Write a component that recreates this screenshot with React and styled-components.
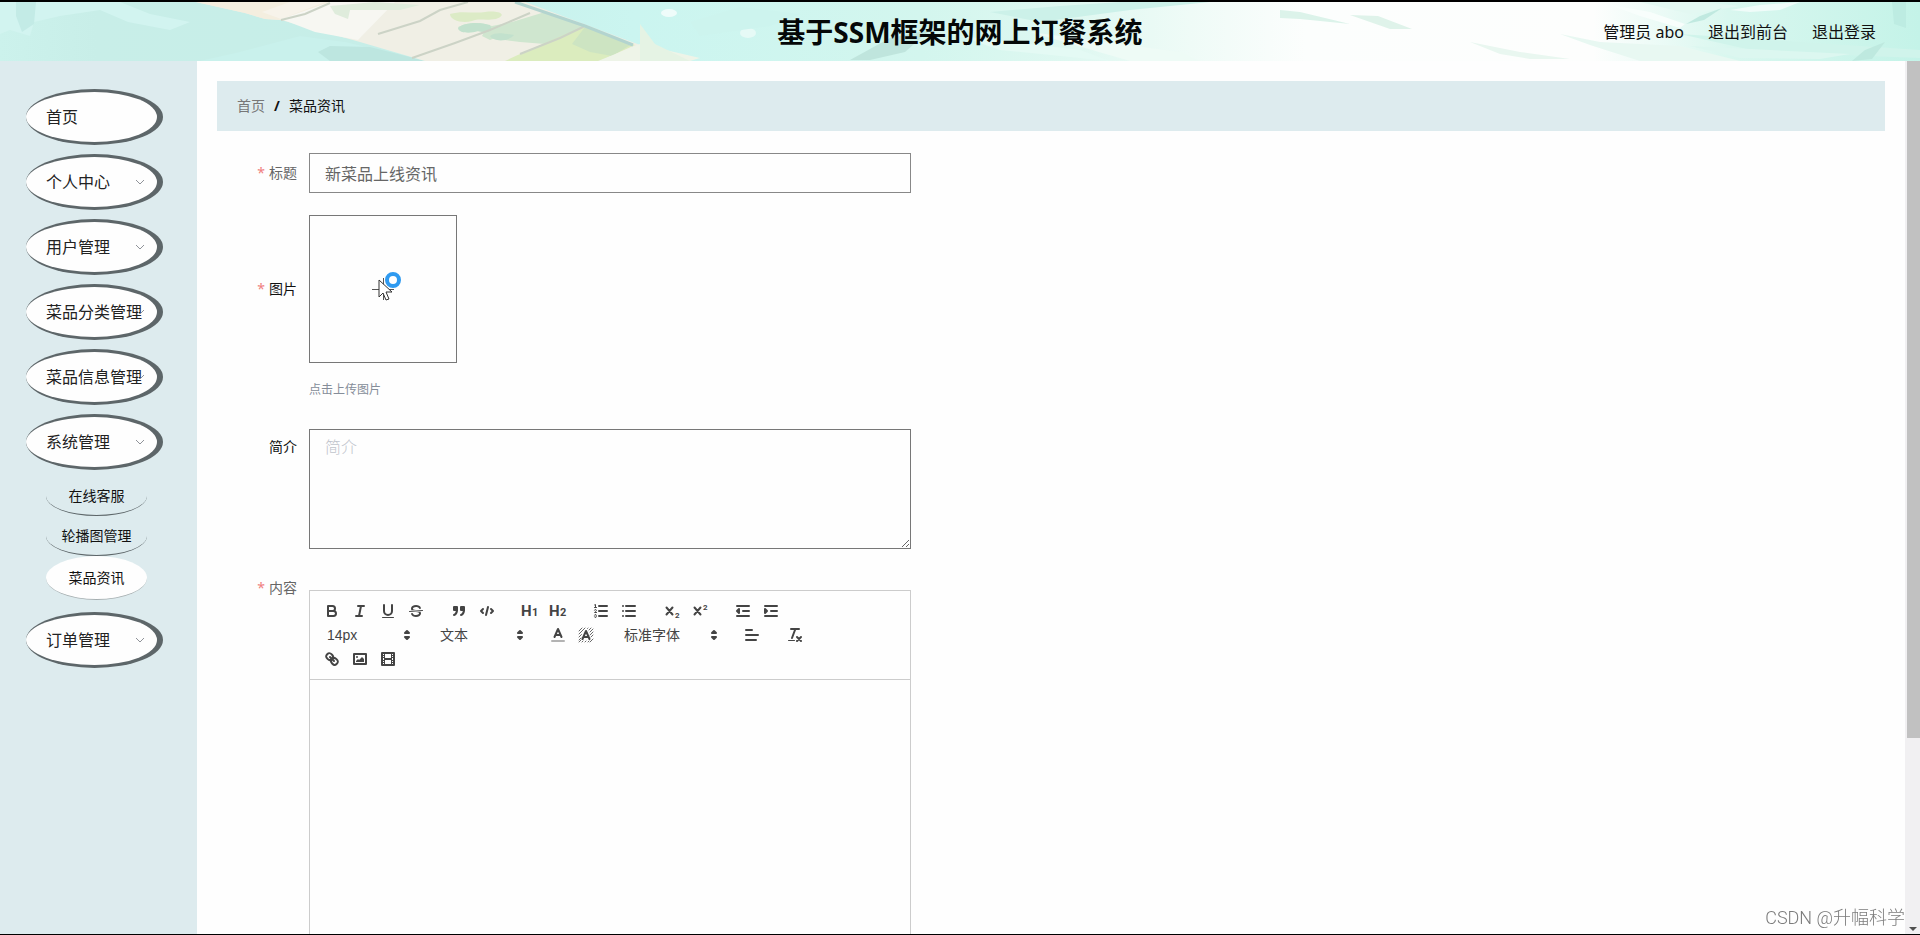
import React from 'react';
import styled, { createGlobalStyle } from 'styled-components';

const GlobalStyle = createGlobalStyle`
  *, *::before, *::after { box-sizing: border-box; }
  html, body { margin: 0; padding: 0; }
  body {
    font-family: "Noto Sans", "Noto Sans CJK SC", sans-serif;
    font-size: 14px;
    color: #111;
    background: #fefefe;
  }
  button, input, textarea, select { font: inherit; color: inherit; margin: 0; }
  a { color: inherit; text-decoration: none; }
`;

const Shell = styled.div`
  display: flex;
  flex-direction: column;
  height: 100vh;
  overflow: hidden;
  border-top: 2px solid #000;
  border-bottom: 1px solid #000;
`;

/* ---------- header ---------- */

const Header = styled.header`
  position: relative;
  flex: none;
  height: 59px;
  display: grid;
  grid-template-columns: 1fr auto 1fr;
  align-items: center;
  padding: 0 44px;
  background: #d3f4ed;
`;

const Art = styled.svg`
  position: absolute;
  inset: 0;
  width: 100%;
  height: 100%;
`;

const Title = styled.h1`
  position: relative;
  grid-column: 2;
  margin: 0;
  font-size: 28px;
  line-height: 40px;
  font-weight: 700;
  color: #050808;
`;

const UserNav = styled.nav`
  position: relative;
  display: flex;
  justify-content: flex-end;
  gap: 24px;
  font-size: 16px;
  line-height: 24px;
`;

function HeaderArt() {
  return (
    <Art viewBox="0 0 1920 59" preserveAspectRatio="none" aria-hidden="true">
      <defs>
        <linearGradient id="base" x1="0" x2="1" y1="0" y2="0">
          <stop offset="0" stopColor="#ccf2ec" />
          <stop offset="0.05" stopColor="#c8eee8" />
          <stop offset="0.2" stopColor="#c6eee8" />
          <stop offset="0.33" stopColor="#cbf5f0" />
          <stop offset="0.48" stopColor="#d3f6ee" />
          <stop offset="0.56" stopColor="#dff8f1" />
          <stop offset="0.62" stopColor="#effbf7" />
          <stop offset="0.68" stopColor="#fcfefd" />
          <stop offset="0.83" stopColor="#fdfefd" />
          <stop offset="0.9" stopColor="#d9f7ef" />
          <stop offset="1" stopColor="#c4f3e8" />
        </linearGradient>
      </defs>
      <rect width="1920" height="59" fill="url(#base)" />
      <path d="M0 0H120L150 12L190 20L170 28L128 20L100 8L60 14L34 20L30 34L10 28L0 32Z" fill="#d2f4f0" />
      <path d="M16 0H36L34 22L22 30L16 14Z" fill="#c3ebe6" />
      <path d="M200 59L240 50L300 34L345 40L425 59Z" fill="#c9f1ec" />
      <path d="M318 50L330 44L370 45L410 55L425 59H330Z" fill="#bde6e0" />
      <path d="M196 0H525L640 43V59H425L360 40L281 18L265 17L245 11Z" fill="#f0efe5" />
      <path d="M196 0H330L281 18L265 17L245 11Z" fill="#f4eedf" />
      <path d="M262 10L290 0H325L281 17Z" fill="#f7f3ea" />
      <path d="M281 17L330 0H395L358 38L315 30Z" fill="#f7f7f2" />
      <path d="M330 4L375 0L420 3L400 8L350 8L348 17L335 12Z" fill="#dfecdc" />
      <path d="M512 20L545 10L585 24L545 42L520 40L505 38L495 36L490 38L482 34L484 30L476 29L462 30L458 25L466 22L480 21L492 24Z" fill="#cfe6cf" />
      <path d="M450 12C462 8 474 12 485 10C500 8 508 13 496 17C484 19 480 16 472 19C462 22 450 18 450 12Z" fill="#dcebc6" />
      <path d="M458 26C464 20 480 20 490 23C494 30 486 31 478 29C470 32 458 31 458 26Z" fill="#c2e1cd" />
      <path d="M490 34C496 29 506 32 514 33C508 40 494 40 490 34Z" fill="#c2e1cd" />
      <path d="M520 52L582 25L635 43L600 59H505Z" fill="#dbecbe" />
      <path d="M585 25L632 42L612 54L590 50L572 42Z" fill="#cde4c2" />
      <path d="M598 59L640 42L700 56L690 59Z" fill="#eef4e8" />
      <g fill="none" stroke="#ccd3c6" strokeWidth="2">
        <path d="M281 18L305 12L330 1" />
        <path d="M378 32L420 19L440 8L468 0" />
        <path d="M412 56L455 41L490 28L530 11" />
        <path d="M520 52L560 36L585 24" />
      </g>
      <path d="M515 0L585 24L633 43" fill="none" stroke="#b3d4cf" strokeWidth="3" />
      <path d="M640 22L655 42L690 59H640Z" fill="#e5f3e4" />
      <ellipse cx="669" cy="11" rx="8" ry="4" fill="#effcfa" />
      <ellipse cx="748" cy="31" rx="8" ry="5" fill="#e6faf6" />
      <path d="M690 20L740 5L800 12L770 24L700 34Z" fill="#cdf4ee" />
      <path d="M850 58L890 36L930 28L905 50L870 58Z" fill="#bfe5dd" />
      <path d="M990 10L1060 4L1120 0H1210L1130 8L1040 20Z" fill="#ccf1e9" />
      <path d="M1030 30L1180 50L1200 59H1130Z" fill="#eefbf6" />
      <path d="M960 34L1080 48L1110 59L1000 48Z" fill="#e4faf4" />
      <path d="M1280 8L1300 10L1350 22L1300 17L1280 16Z" fill="#dcf3ea" />
      <path d="M1350 13L1378 14L1412 27L1390 27Z" fill="#dff3ea" />
      <path d="M1470 40L1520 50L1570 57H1530L1500 52Z" fill="#e9f7f0" />
      <path d="M1560 32L1600 40L1680 44L1740 59H1640L1590 43Z" fill="#e8f8f2" />
      <path d="M1640 0L1690 12L1740 4L1700 0Z" fill="#e3f8f2" />
      <path d="M1610 3L1650 10L1685 22L1680 26L1640 14Z" fill="#f8fefc" />
      <path d="M1686 22L1700 14L1722 6L1704 18Z" fill="#c0e9e0" />
      <path d="M1730 8L1760 3L1800 0L1780 8L1750 10Z" fill="#f0fcf9" />
      <path d="M1680 32L1920 48V56L1760 50Z" fill="#d0f4eb" />
      <path d="M1690 44L1850 52L1820 57L1740 56Z" fill="#dcf7f0" />
      <path d="M1852 59L1865 48L1885 40L1872 57Z" fill="#bee9df" />
      <path d="M1892 0H1906V26L1894 22Z" fill="#bdece2" />
    </Art>
  );
}

/* ---------- frame ---------- */

const Body = styled.div`
  flex: 1;
  min-height: 0;
  display: flex;
`;

const Sidebar = styled.nav`
  flex: none;
  width: 197px;
  padding: 28px 34px 0 26px;
  background: #ddebee;
`;

const Menu = styled.ul`
  list-style: none;
  margin: 0;
  padding: 0;
  display: flex;
  flex-direction: column;
  gap: 9px;
`;

const Pill = styled.button`
  display: flex;
  align-items: center;
  width: 100%;
  height: 56px;
  padding: 0 12px 0 20px;
  border: solid #5d6669;
  border-width: 3px 6px 3px 0;
  border-radius: 50%;
  background: #fefefe;
  font-size: 16px;
  line-height: 24px;
  color: #222;
  white-space: nowrap;
  cursor: pointer;

  svg { flex: none; margin-left: auto; }
`;

const PillText = styled.span`
  flex: 0 1 auto;
  min-width: 0;
  overflow: visible;
`;

const SubMenu = styled.ul`
  list-style: none;
  margin: 6px 0 3px;
  padding: 0 16px 0 20px;
`;

const SubLink = styled.a`
  display: flex;
  align-items: center;
  justify-content: center;
  height: ${(p) => (p.$active ? 44 : 40)}px;
  border-bottom: 1px solid ${(p) => (p.$active ? '#a4adaf' : '#5d6669')};
  border-radius: 50%;
  background: ${(p) => (p.$active ? '#fefefe' : 'transparent')};
  line-height: 20px;
  white-space: nowrap;
`;

const Main = styled.main`
  flex: 1;
  min-width: 0;
  overflow: hidden;
  padding: 20px 20px 0;
`;

const ScrollTrack = styled.div`
  flex: none;
  width: 15px;
  display: flex;
  flex-direction: column;
  align-items: flex-end;
  justify-content: space-between;
  background: #f1f0f2;
`;

const ScrollThumb = styled.div`
  width: 13px;
  height: 77.5%;
  background: #c1c1c1;
`;

const ScrollArrow = styled.svg`
  width: 14px;
  height: 8px;
`;

const Crumbs = styled.nav`
  display: flex;
  align-items: center;
  gap: 8px;
  height: 50px;
  padding: 0 20px;
  background: #ddebee;
  line-height: 20px;

  a { color: #777; }
  b { width: 8px; text-align: center; }
`;

/* ---------- form ---------- */

const Form = styled.form`
  display: flex;
  flex-direction: column;
  max-width: 694px;
  padding-top: 22px;
`;

const Row = styled.div`
  display: flex;
  align-items: ${(p) => (p.$center ? 'center' : 'flex-start')};
  gap: 12px;
  margin-bottom: ${(p) => p.$gap || 22}px;
`;

const Label = styled.label`
  flex: none;
  width: 80px;
  text-align: right;
  line-height: ${(p) => p.$line || 20}px;
  color: ${(p) => (p.$muted ? '#666' : '#111')};

  &::before {
    content: ${(p) => (p.$required ? '"*"' : 'none')};
    margin-right: 4px;
    color: #f08080;
  }
`;

const TextInput = styled.input`
  flex: 1;
  min-width: 0;
  height: 40px;
  padding: 0 15px;
  border: 1px solid #888;
  border-radius: 0;
  background: #fefefe;
  font-size: 16px;
  color: #666;
  outline: none;
`;

const TextArea = styled.textarea`
  flex: 1;
  min-width: 0;
  height: 120px;
  padding: 5px 15px;
  border: 1px solid #777;
  border-radius: 0;
  background: #fefefe;
  font-size: 16px;
  line-height: 24px;
  outline: none;
  resize: vertical;

  &::placeholder { color: #c0c4cc; opacity: 1; font-weight: 300; }
`;

const Upload = styled.button`
  position: relative;
  display: flex;
  align-items: center;
  justify-content: center;
  width: 148px;
  height: 148px;
  padding: 0;
  border: 1px solid #777;
  background: #fefefe;
  cursor: pointer;
`;

const Pointer = styled.svg`
  position: absolute;
  left: 66px;
  top: 54px;
  width: 28px;
  height: 34px;
`;

const Tip = styled.p`
  margin: 0 0 29px 92px;
  font-size: 12px;
  line-height: 20px;
  color: #858d99;
`;

/* ---------- rich text editor ---------- */

const Editor = styled.div`
  flex: 1;
  min-width: 0;
  margin-top: 12px;
  border: 1px solid #ccc;
`;

const Toolbar = styled.div`
  display: flex;
  flex-direction: column;
  padding: 8px;
  border-bottom: 1px solid #ccc;
`;

const ToolRow = styled.div`
  display: flex;
  gap: 15px;
  height: 24px;
`;

const Group = styled.div`
  display: flex;
`;

const Tool = styled.button`
  display: flex;
  align-items: center;
  justify-content: center;
  width: 28px;
  height: 24px;
  padding: 3px 5px;
  border: 0;
  background: none;
  cursor: pointer;
`;

const Glyph = styled.svg`
  flex: none;
  width: 18px;
  height: 18px;
  fill: none;
  stroke: #444;
  stroke-width: 2;
  stroke-linecap: round;
  stroke-linejoin: round;

  .fill { fill: #444; stroke: none; }
  .solid { fill: #444; }
  .thin { stroke-width: 1; }
  .soft { opacity: 0.4; }
  text { fill: #444; stroke: none; font-family: Roboto, sans-serif; font-weight: 700; }
`;

const Picker = styled.span`
  display: grid;
  align-items: center;
  width: ${(p) => p.$width}px;
  height: 24px;

  > * { grid-area: 1 / 1; }
  > svg { justify-self: end; pointer-events: none; }
`;

const Select = styled.select`
  width: 100%;
  height: 24px;
  padding: 0 18px 0 9px;
  border: 0;
  background: none;
  appearance: none;
  font-family: "Liberation Sans", "Noto Sans CJK SC", sans-serif;
  font-size: 14px;
  line-height: 24px;
  color: #444;
  outline: none;
`;

const Canvas = styled.div`
  min-height: 400px;
  padding: 12px 15px;
  outline: none;
`;

const Watermark = styled.div`
  position: fixed;
  right: 15px;
  bottom: 4px;
  font-family: Roboto, "Noto Sans CJK SC", sans-serif;
  font-size: 18px;
  font-weight: 300;
  line-height: 26px;
  color: #7c7c7c;
  pointer-events: none;
`;

const ICONS = {
  bold: (
    <>
      <path d="M5 4H9.5A2.5 2.5 0 0 1 9.5 9H5Z" />
      <path d="M5 9H10.5A2.5 2.5 0 0 1 10.5 14H5Z" />
    </>
  ),
  italic: <path d="M7 4H13M5 14H11M8 14L10 4" />,
  underline: (
    <>
      <path d="M5 3V9A4 4 0 0 0 13 9V3" />
      <rect className="fill" x="3" y="15" width="12" height="1" rx="0.5" />
    </>
  ),
  strike: (
    <>
      <path className="thin" d="M15.5 8.5L2.5 9.5" />
      <path className="fill" d="M9.007,8C6.542,7.791,6,7.519,6,6.5,6,5.792,7.283,5,9,5c1.571,0,2.765.679,2.969,1.309a1,1,0,0,0,1.9-.617C13.356,4.106,11.354,3,9,3,6.2,3,4,4.538,4,6.5a3.2,3.2,0,0,0,.5,1.843Z" />
      <path className="fill" d="M8.984,10C11.457,10.208,12,10.479,12,11.5c0,0.708-1.283,1.5-3,1.5-1.571,0-2.765-.679-2.969-1.309a1,1,0,1,0-1.9.617C4.644,13.894,6.646,15,9,15c2.8,0,5-1.538,5-3.5a3.2,3.2,0,0,0-.5-1.843Z" />
    </>
  ),
  quote: (
    <>
      <rect className="solid" x="4" y="5" width="3" height="3" />
      <rect className="solid" x="11" y="5" width="3" height="3" />
      <path className="solid" d="M7 8c0 4.031-3 5-3 5M14 8c0 4.031-3 5-3 5" />
    </>
  ),
  code: <path d="M5 7L3 9L5 11M13 7L15 9L13 11M10 5L8 13" />,
  h1: (
    <>
      <text x="0" y="14" fontSize="15">H</text>
      <text x="11" y="14" fontSize="11">1</text>
    </>
  ),
  h2: (
    <>
      <text x="0" y="14" fontSize="15">H</text>
      <text x="11" y="14" fontSize="11">2</text>
    </>
  ),
  ordered: (
    <>
      <path d="M7 4H15M7 9H15M7 14H15" />
      <path className="thin" d="M2.5 5.5H4.5M3.5 5.5V2.5L2.6 2.9M4.5 10.5h-2c0-.234 1.85-1.076 1.85-2.234A.959.959 0 0 0 2.5 8.156M2.5 14.846a.959.959 0 0 0 1.85-.109A.7.7 0 0 0 3.75 14a.688.688 0 0 0 .6-.736.959.959 0 0 0-1.85-.109" />
    </>
  ),
  bullet: <path d="M6 4H15M6 9H15M6 14H15M3 4H3M3 9H3M3 14H3" />,
  sub: (
    <>
      <path d="M3.5 5.5L9.5 12.5M9.5 5.5L3.5 12.5" />
      <text x="12" y="16" fontSize="8">2</text>
    </>
  ),
  sup: (
    <>
      <path d="M3.5 5.5L9.5 12.5M9.5 5.5L3.5 12.5" />
      <text x="12" y="8" fontSize="8">2</text>
    </>
  ),
  outdent: (
    <>
      <path d="M3 14H15M3 4H15M9 9H15" />
      <path className="solid" d="M5 7V11L3 9Z" />
    </>
  ),
  indent: (
    <>
      <path d="M3 14H15M3 4H15M9 9H15" />
      <path className="solid" d="M3 7V11L5 9Z" />
    </>
  ),
  color: (
    <>
      <path className="soft" d="M3 15H15" />
      <path d="M5.5 11L9 3L12.5 11M6.4 9H11.6" />
    </>
  ),
  background: (
    <>
      <path className="thin" opacity="0.8" d="M2 5L5 2M2 8L8 2M2 11L4.5 8.5M2 14L4 12M2 16L4 14M5 16L6 15M8 16L9 15M11 16L12 15M13 16L16 13M10.5 2.5L11 2M12 4L14 2M13 6L16 3M13 9L16 6M14 11L16 9" />
      <path d="M5.5 13L9 5L12.5 13M6.4 11H11.6" />
    </>
  ),
  align: <path d="M3 9H15M3 14H13M3 4H9" />,
  clean: (
    <>
      <path d="M5 3H13M6 12L9.35 3M11 11L15 15M15 11L11 15" />
      <rect className="fill" x="2" y="14" width="7" height="1" rx="0.5" />
    </>
  ),
  link: (
    <>
      <path d="M7 7L11 11" />
      <path d="M8.9,4.577a3.476,3.476,0,0,1,.36,4.679A3.476,3.476,0,0,1,4.577,8.9C3.185,7.5,2.035,6.4,4.217,4.217S7.5,3.185,8.9,4.577Z" />
      <path d="M13.423,9.1a3.476,3.476,0,0,0-4.679-.36,3.476,3.476,0,0,0,.36,4.679c1.392,1.392,2.5,2.542,4.679.36S14.815,10.5,13.423,9.1Z" />
    </>
  ),
  image: (
    <>
      <rect x="3" y="4" width="12" height="10" />
      <circle className="fill" cx="6" cy="7" r="1" />
      <path className="fill" d="M5 12V11L7 9L8 10L11 7L13 9V12Z" />
    </>
  ),
  video: (
    <>
      <rect x="3" y="3" width="12" height="12" />
      <path className="fill" d="M5 3H6V15H5ZM12 3H13V15H12ZM5 8H13V10H5ZM3 5H6V6H3ZM3 7H6V8H3ZM3 10H6V11H3ZM3 12H6V13H3ZM12 5H15V6H12ZM12 7H15V8H12ZM12 10H15V11H12ZM12 12H15V13H12Z" />
    </>
  ),
  arrows: <path d="M7 11H11L9 13ZM7 7H11L9 5Z" />,
};

function Icon({ name }) {
  return <Glyph viewBox="0 0 18 18" aria-hidden="true">{ICONS[name]}</Glyph>;
}

function Tools({ items }) {
  return (
    <Group>
      {items.map(([name, label]) => (
        <Tool key={name} type="button" aria-label={label}><Icon name={name} /></Tool>
      ))}
    </Group>
  );
}

function PickerField({ label, value, width }) {
  return (
    <Picker $width={width}>
      <Select aria-label={label} defaultValue={value}>
        <option>{value}</option>
      </Select>
      <Icon name="arrows" />
    </Picker>
  );
}

function Chevron() {
  return (
    <svg width="10" height="6" viewBox="0 0 10 6" fill="none" stroke="#909399" aria-hidden="true">
      <path d="M1 1L5 5L9 1" />
    </svg>
  );
}

const MENU = [
  { text: '首页', plain: true },
  { text: '个人中心' },
  { text: '用户管理' },
  { text: '菜品分类管理' },
  { text: '菜品信息管理' },
  { text: '系统管理', children: ['在线客服', '轮播图管理', '菜品资讯'] },
  { text: '订单管理' },
];

export default function App() {
  return (
    <>
      <GlobalStyle />
      <Shell>
        <Header>
          <HeaderArt />
          <Title>基于SSM框架的网上订餐系统</Title>
          <UserNav>
            <span>管理员 abo</span>
            <a href="#front">退出到前台</a>
            <a href="#logout">退出登录</a>
          </UserNav>
        </Header>
        <Body>
          <Sidebar>
            <Menu>
              {MENU.map((item) => (
                <li key={item.text}>
                  <Pill type="button">
                    <PillText>{item.text}</PillText>
                    {!item.plain && <Chevron />}
                  </Pill>
                  {item.children && (
                    <SubMenu>
                      {item.children.map((c) => (
                        <li key={c}>
                          <SubLink href="#sub" $active={c === '菜品资讯'}>{c}</SubLink>
                        </li>
                      ))}
                    </SubMenu>
                  )}
                </li>
              ))}
            </Menu>
          </Sidebar>
          <Main>
            <Crumbs>
              <a href="#home">首页</a>
              <b>/</b>
              <span>菜品资讯</span>
            </Crumbs>
            <Form>
              <Row $center>
                <Label htmlFor="title" $required $muted>标题</Label>
                <TextInput id="title" defaultValue="新菜品上线资讯" />
              </Row>
              <Row $center $gap={17}>
                <Label htmlFor="picture" $required>图片</Label>
                <Upload id="picture" type="button">
                  <svg width="22" height="22" viewBox="0 0 22 22" stroke="#555" fill="none" aria-hidden="true">
                    <path d="M11.5 0V22M0 11.5H22" />
                  </svg>
                  <Pointer viewBox="0 0 28 34" aria-hidden="true">
                    <path d="M3 10V27L7 23L10 30L13 29L10 22H16Z" fill="#fff" stroke="#333" />
                    <circle cx="17" cy="10" r="6" fill="#fff" stroke="#2f9af0" strokeWidth="4" />
                  </Pointer>
                </Upload>
              </Row>
              <Tip>点击上传图片</Tip>
              <Row $gap={29}>
                <Label htmlFor="intro" $line={36}>简介</Label>
                <TextArea id="intro" placeholder="简介" />
              </Row>
              <Row>
                <Label as="span" id="content-label" $required $muted>内容</Label>
                <Editor>
                  <Toolbar>
                    <ToolRow>
                      <Tools items={[['bold', '加粗'], ['italic', '斜体'], ['underline', '下划线'], ['strike', '删除线']]} />
                      <Tools items={[['quote', '引用'], ['code', '代码']]} />
                      <Tools items={[['h1', '一级标题'], ['h2', '二级标题']]} />
                      <Tools items={[['ordered', '有序列表'], ['bullet', '无序列表']]} />
                      <Tools items={[['sub', '下标'], ['sup', '上标']]} />
                      <Tools items={[['outdent', '减少缩进'], ['indent', '增加缩进']]} />
                    </ToolRow>
                    <ToolRow>
                      <PickerField label="字号" value="14px" width={98} />
                      <PickerField label="段落" value="文本" width={98} />
                      <Tools items={[['color', '文字颜色'], ['background', '背景颜色']]} />
                      <PickerField label="字体" value="标准字体" width={108} />
                      <Tools items={[['align', '对齐']]} />
                      <Tools items={[['clean', '清除格式']]} />
                    </ToolRow>
                    <ToolRow>
                      <Tools items={[['link', '链接'], ['image', '图片'], ['video', '视频']]} />
                    </ToolRow>
                  </Toolbar>
                  <Canvas contentEditable suppressContentEditableWarning role="textbox" aria-labelledby="content-label" />
                </Editor>
              </Row>
            </Form>
          </Main>
          <ScrollTrack aria-hidden="true">
            <ScrollThumb />
            <ScrollArrow viewBox="0 0 14 8"><path d="M3 1H11L7 5Z" fill="#505050" /></ScrollArrow>
          </ScrollTrack>
        </Body>
      </Shell>
      <Watermark>CSDN @升幅科学</Watermark>
    </>
  );
}
